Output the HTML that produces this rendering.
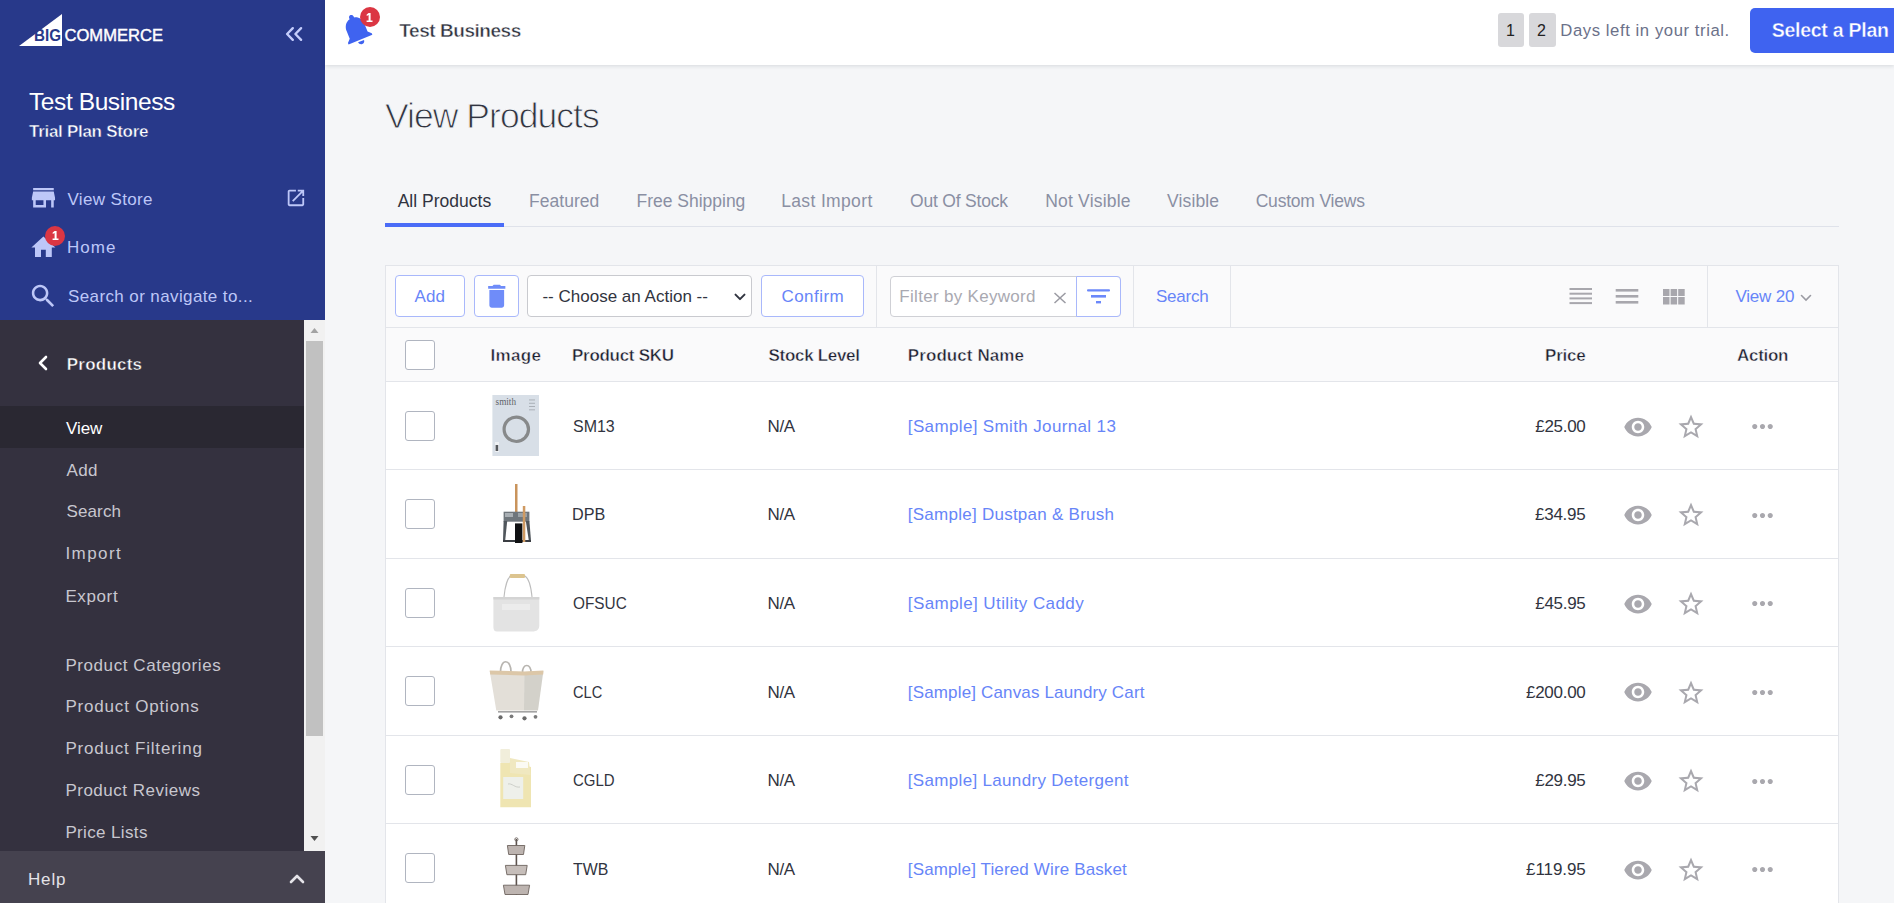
<!DOCTYPE html>
<html><head><meta charset="utf-8"><title>View Products</title>
<style>
html,body{margin:0;padding:0;width:1894px;height:903px;overflow:hidden;background:#f5f6f8;font-family:"Liberation Sans",sans-serif;}
.t{position:absolute;white-space:nowrap;font-family:"Liberation Sans",sans-serif;}
.r{position:absolute;box-sizing:border-box;}
svg{position:absolute;overflow:visible;}
</style></head><body>
<!-- SIDEBAR -->
<div class="r" style="left:0;top:0;width:325px;height:320px;background:#28398a"></div>
<svg style="left:0;top:0" width="200" height="60">
  <polygon points="19,46 62,14 62,46" fill="#fff"/>
  <text x="34" y="41.2" font-family="Liberation Sans" font-weight="700" font-size="17.4" fill="#28398a" textLength="27" lengthAdjust="spacingAndGlyphs">BIG</text>
  <text x="64.5" y="41.3" font-family="Liberation Sans" font-weight="400" font-size="17.4" fill="#fff" stroke="#fff" stroke-width="0.45" textLength="98.5" lengthAdjust="spacingAndGlyphs">COMMERCE</text>
</svg>
<svg style="left:0;top:0" width="325" height="60">
  <polyline points="292.8,28.2 287.1,34 292.8,39.8" fill="none" stroke="#c4cdfc" stroke-width="2.4" stroke-linecap="round" stroke-linejoin="round"/>
  <polyline points="301.1,28.2 295.4,34 301.1,39.8" fill="none" stroke="#c4cdfc" stroke-width="2.4" stroke-linecap="round" stroke-linejoin="round"/>
</svg>
<!-- store icon -->
<svg style="left:27.9px;top:183.3px" width="30.9" height="29.4" viewBox="0 0 24 24" preserveAspectRatio="none"><path fill="#bdc7f8" d="M20 4H4v2h16V4zm1 10v-2l-1-5H4l-1 5v2h1v6h10v-6h4v6h2v-6h1zm-9 4H6v-4h6v4z"/></svg>
<!-- external link -->
<svg style="left:285.3px;top:187.3px" width="21.9" height="21.9" viewBox="0 0 24 24"><path fill="#bdc7f8" d="M19 19H5V5h7V3H5c-1.11 0-2 .9-2 2v14c0 1.1.89 2 2 2h14c1.1 0 2-.9 2-2v-7h-2v7zM14 3v2h3.59l-9.83 9.83 1.41 1.41L19 6.41V10h2V3h-7z"/></svg>
<!-- home icon -->
<svg style="left:28.6px;top:233px" width="28.8" height="28.8" viewBox="0 0 24 24"><path fill="#bdc7f8" d="M10 20v-6h4v6h5v-8h3L12 3 2 12h3v8z"/></svg>
<div class="r" style="left:45px;top:225.5px;width:20px;height:20px;border-radius:50%;background:#db3643"></div>
<svg style="left:51.5px;top:231.3px" width="7" height="9" viewBox="0 0 7 9"><path fill="#fff" d="M2.6 0H4.6V7.5H6.5V9H0.6V7.5H2.6V2.1L0.7 3.1V1.4Z"/></svg>
<!-- search icon -->
<svg style="left:28.0px;top:280.6px" width="30.6" height="30.6" viewBox="0 0 24 24"><path fill="#bdc7f8" d="M15.5 14h-.79l-.28-.27C15.41 12.59 16 11.11 16 9.5 16 5.910 13.09 3 9.5 3S3 5.91 3 9.5 5.91 16 9.5 16c1.61 0 3.09-.59 4.230-1.57l.27.28v.79l5 4.99L20.49 19l-4.99-5zm-6 0C7.01 14 5 11.99 5 9.5S7.01 5 9.5 5 14 7.01 14 9.5 11.99 14 9.5 14z"/></svg>
<!-- dark area -->
<div class="r" style="left:0;top:320px;width:304px;height:531px;background:#34313f"></div>
<div class="r" style="left:304px;top:320px;width:21px;height:531px;background:#f1f1f1"></div>
<div class="r" style="left:306px;top:341px;width:17px;height:395px;background:#c1c1c1"></div>
<svg style="left:304px;top:320px" width="21" height="531">
  <polygon points="10.5,8 6.5,13 14.5,13" fill="#a3a3a3"/>
  <polygon points="6.5,516 14.5,516 10.5,521" fill="#505050"/>
</svg>
<svg style="left:0;top:320px" width="304" height="60">
  <polyline points="46,37 40,43 46,49" fill="none" stroke="#fff" stroke-width="2.6" stroke-linecap="round" stroke-linejoin="round"/>
</svg>
<div class="r" style="left:0;top:406px;width:304px;height:42px;background:#2a2832"></div>
<div class="r" style="left:0;top:851px;width:325px;height:52px;background:#45424f"></div>
<svg style="left:0;top:851px" width="325" height="52">
  <polyline points="291,31 297,25 303,31" fill="none" stroke="#e4e3e8" stroke-width="2.6" stroke-linecap="round" stroke-linejoin="round"/>
</svg>

<!-- HEADER -->
<div class="r" style="left:325px;top:0;width:1569px;height:65px;background:#fff;box-shadow:0 1px 4px rgba(30,40,60,0.14)"></div>
<svg style="left:336.8px;top:10.1px" width="38.5" height="38.5" viewBox="0 0 24 24"><g transform="rotate(-22 12 12)"><path fill="#3f63f0" d="M12 22c1.1 0 2-.9 2-2h-4c0 1.1.89 2 2 2zm6-6v-5c0-3.070-1.64-5.64-4.5-6.32V4c0-.83-.67-1.5-1.5-1.5s-1.5.67-1.5 1.5v.68C7.63 5.36 6 7.920 6 11v5l-2 2v1h16v-1l-2-2z"/></g></svg>
<div class="r" style="left:360px;top:7px;width:20px;height:20px;border-radius:50%;background:#db3643"></div>
<svg style="left:366.3px;top:13.1px" width="7" height="9" viewBox="0 0 7 9"><path fill="#fff" d="M2.6 0H4.6V7.5H6.5V9H0.6V7.5H2.6V2.1L0.7 3.1V1.4Z"/></svg>
<div class="r" style="left:1498px;top:13px;width:26px;height:34px;border-radius:3px;background:#d8d8db"></div>
<div class="r" style="left:1529px;top:13px;width:27px;height:34px;border-radius:3px;background:#d8d8db"></div>
<div class="r" style="left:1750px;top:8px;width:160px;height:45px;border-radius:5px;background:#3f63f0"></div>

<!-- MAIN -->
<div class="r" style="left:385px;top:226px;width:1454px;height:1px;background:#dfe2ea"></div>
<div class="r" style="left:385px;top:223px;width:119px;height:4px;background:#4a6cf7"></div>

<!-- toolbar panel -->
<div class="r" style="left:385px;top:265px;width:1454px;height:63px;background:#fafafb;border:1px solid #e3e5ea"></div>
<div class="r" style="left:876px;top:266px;width:1px;height:61px;background:#e3e5ea"></div>
<div class="r" style="left:1133px;top:266px;width:1px;height:61px;background:#e3e5ea"></div>
<div class="r" style="left:1230px;top:266px;width:1px;height:61px;background:#e3e5ea"></div>
<div class="r" style="left:1707px;top:266px;width:1px;height:61px;background:#e3e5ea"></div>
<div class="r" style="left:395px;top:275px;width:70px;height:42px;border:1px solid #a9b8fb;border-radius:4px;background:#fff"></div>
<div class="r" style="left:474px;top:275px;width:45px;height:42px;border:1px solid #a9b8fb;border-radius:4px;background:#fff"></div>
<svg style="left:481.6px;top:281.2px" width="29.5" height="30.7" viewBox="0 0 24 24" preserveAspectRatio="none"><path fill="#6f8cf9" d="M6 19c0 1.1.9 2 2 2h8c1.1 0 2-.9 2-2V7H6v12zM19 4h-3.5l-1-1h-5l-1 1H5v2h14V4z"/></svg>
<div class="r" style="left:527px;top:275px;width:225px;height:42px;border:1px solid #c9cacf;border-radius:4px;background:#fff"></div>
<svg style="left:527px;top:275px" width="225" height="42">
  <polyline points="208.5,19.6 213,24.1 217.5,19.6" fill="none" stroke="#313440" stroke-width="2" stroke-linecap="round" stroke-linejoin="round"/>
</svg>
<div class="r" style="left:761px;top:275px;width:103px;height:42px;border:1px solid #a9b8fb;border-radius:4px;background:#fff"></div>
<div class="r" style="left:890px;top:275.5px;width:231px;height:41.5px;border:1px solid #cfd0d5;border-radius:4px;background:#fff"></div>
<div class="r" style="left:1076px;top:275.5px;width:45px;height:41.5px;border:1px solid #a9b8fb;border-radius:0 4px 4px 0;background:#fff"></div>
<svg style="left:1050px;top:288px" width="20" height="20">
  <line x1="4.5" y1="5" x2="15.5" y2="15" stroke="#9a9aa2" stroke-width="1.5"/>
  <line x1="15.5" y1="5" x2="4.5" y2="15" stroke="#9a9aa2" stroke-width="1.5"/>
</svg>
<svg style="left:1086px;top:288px" width="26" height="18">
  <rect x="1" y="1.2" width="23" height="2.2" rx="1" fill="#6b88fa"/>
  <rect x="5" y="7" width="15" height="2.6" fill="#6b88fa"/>
  <rect x="10" y="13" width="5" height="2.4" fill="#6b88fa"/>
</svg>
<svg style="left:1568px;top:287px" width="130" height="20">
  <rect x="1.5" y="1" width="22.5" height="2" fill="#a8a7ad"/>
  <rect x="1.5" y="5.7" width="22.5" height="2" fill="#a8a7ad"/>
  <rect x="1.5" y="10.4" width="22.5" height="2" fill="#a8a7ad"/>
  <rect x="1.5" y="15.1" width="22.5" height="2" fill="#a8a7ad"/>
  <rect x="47.7" y="2" width="22.6" height="2.6" fill="#a8a7ad"/>
  <rect x="47.7" y="8" width="22.6" height="2.6" fill="#a8a7ad"/>
  <rect x="47.7" y="14" width="22.6" height="2.6" fill="#a8a7ad"/>
  <rect x="95" y="2" width="6.5" height="7" fill="#a8a7ad"/>
  <rect x="102.6" y="2" width="6.5" height="7" fill="#a8a7ad"/>
  <rect x="110.2" y="2" width="6.5" height="7" fill="#a8a7ad"/>
  <rect x="95" y="10" width="6.5" height="7.5" fill="#a8a7ad"/>
  <rect x="102.6" y="10" width="6.5" height="7.5" fill="#a8a7ad"/>
  <rect x="110.2" y="10" width="6.5" height="7.5" fill="#a8a7ad"/>
</svg>
<svg style="left:1798px;top:290px" width="16" height="14">
  <polyline points="3.5,5.5 8,10 12.5,5.5" fill="none" stroke="#9a9aa2" stroke-width="1.6" stroke-linecap="round"/>
</svg>

<!-- TABLE -->
<div class="r" style="left:385px;top:327px;width:1454px;height:600px;background:#fff;border-left:1px solid #e3e5ea;border-right:1px solid #e3e5ea"></div>
<div class="r" style="left:386px;top:328px;width:1452px;height:53px;background:#fafafb"></div>

<div class="r" style="left:405px;top:340px;width:30px;height:30px;border:1px solid #b0b5c0;border-radius:3px;background:#fff"></div>
<div class="r" style="left:386px;top:381.00px;width:1452px;height:1px;background:#e3e5ea"></div>
<div class="r" style="left:405px;top:411.00px;width:30px;height:30px;border:1px solid #b0b5c0;border-radius:3px;background:#fff"></div>
<svg style="left:492px;top:394.70px" width="48" height="62" viewBox="0 0 48 62">
<rect x="0.4" y="0" width="46.6" height="61" fill="#d8dfe7"/>
<text x="3.6" y="10.3" font-family="Liberation Serif" font-size="10.5" fill="#606368" textLength="20.4" lengthAdjust="spacingAndGlyphs">smith</text>
<rect x="37" y="4.5" width="6" height="0.9" fill="#a5abb2"/><rect x="37" y="7.8" width="6" height="0.9" fill="#a5abb2"/><rect x="37" y="11.1" width="6" height="0.9" fill="#a5abb2"/><rect x="37" y="14.4" width="6" height="0.9" fill="#a5abb2"/>
<circle cx="24.3" cy="34.3" r="12.2" fill="none" stroke="#87898a" stroke-width="3.2"/>
<rect x="3" y="47" width="4" height="10" fill="#eef1f4"/>
<rect x="3.6" y="50" width="2.6" height="6" fill="#55585c"/>
</svg>
<svg style="left:1623.00px;top:411.60px" width="30" height="30" viewBox="0 0 24 24"><path fill="#a9a8ae" d="M12 4.5C7 4.5 2.73 7.61 1 12c1.73 4.39 6 7.5 11 7.5s9.27-3.11 11-7.5c-1.73-4.39-6-7.5-11-7.5zM12 17c-2.76 0-5-2.24-5-5s2.24-5 5-5 5 2.24 5 5-2.24 5-5 5zm0-8c-1.66 0-3 1.34-3 3s1.34 3 3 3 3-1.34 3-3-1.34-3-3-3z"/></svg>
<svg style="left:1675.90px;top:411.80px" width="30" height="30" viewBox="0 0 24 24"><path fill="#a9a8ae" d="M22 9.24l-7.19-.62L12 2 9.19 8.63 2 9.24l5.46 4.73L5.82 21 12 17.27 18.18 21l-1.63-7.03L22 9.24zM12 15.4l-3.76 2.27 1-4.28-3.32-2.88 4.38-.38L12 6.1l1.71 4.04 4.38.38-3.32 2.88 1 4.28L12 15.4z"/></svg>
<svg style="left:1746.50px;top:411.10px" width="31" height="31" viewBox="0 0 24 24"><path fill="#a9a8ae" d="M6 10c-1.1 0-2 .9-2 2s.9 2 2 2 2-.9 2-2-.9-2-2-2zm12 0c-1.1 0-2 .9-2 2s.9 2 2 2 2-.9 2-2-.9-2-2-2zm-6 0c-1.1 0-2 .9-2 2s.9 2 2 2 2-.9 2-2-.9-2-2-2z"/></svg>
<div class="r" style="left:386px;top:469.40px;width:1452px;height:1px;background:#e3e5ea"></div>
<div class="r" style="left:405px;top:499.40px;width:30px;height:30px;border:1px solid #b0b5c0;border-radius:3px;background:#fff"></div>
<svg style="left:492px;top:483.10px" width="48" height="62" viewBox="0 0 48 62">
<rect x="23" y="1" width="2.5" height="30" fill="#c9945c"/>
<rect x="11.6" y="28.7" width="25.8" height="10" fill="#6f767c"/>
<rect x="13" y="30" width="8" height="4" fill="#a9afb4"/><rect x="26" y="30" width="9" height="4" fill="#9aa1a6"/>
<path d="M11.6 38 L15.2 38 L13.2 57.5 L11 57.5 Z" fill="#50565c"/>
<path d="M33.8 38 L37.4 38 L39 57.5 L36.8 57.5 Z" fill="#50565c"/>
<rect x="11" y="57" width="28" height="2" fill="#3a3d42"/>
<rect x="23" y="40.4" width="7.4" height="19.6" fill="#101113"/>
<rect x="30.8" y="23" width="2.5" height="36" fill="#cf9a62"/>
</svg>
<svg style="left:1623.00px;top:500.20px" width="30" height="30" viewBox="0 0 24 24"><path fill="#a9a8ae" d="M12 4.5C7 4.5 2.73 7.61 1 12c1.73 4.39 6 7.5 11 7.5s9.27-3.11 11-7.5c-1.73-4.39-6-7.5-11-7.5zM12 17c-2.76 0-5-2.24-5-5s2.24-5 5-5 5 2.24 5 5-2.24 5-5 5zm0-8c-1.66 0-3 1.34-3 3s1.34 3 3 3 3-1.34 3-3-1.34-3-3-3z"/></svg>
<svg style="left:1675.90px;top:500.40px" width="30" height="30" viewBox="0 0 24 24"><path fill="#a9a8ae" d="M22 9.24l-7.19-.62L12 2 9.19 8.63 2 9.24l5.46 4.73L5.82 21 12 17.27 18.18 21l-1.63-7.03L22 9.24zM12 15.4l-3.76 2.27 1-4.28-3.32-2.88 4.38-.38L12 6.1l1.71 4.04 4.38.38-3.32 2.88 1 4.28L12 15.4z"/></svg>
<svg style="left:1746.50px;top:499.70px" width="31" height="31" viewBox="0 0 24 24"><path fill="#a9a8ae" d="M6 10c-1.1 0-2 .9-2 2s.9 2 2 2 2-.9 2-2-.9-2-2-2zm12 0c-1.1 0-2 .9-2 2s.9 2 2 2 2-.9 2-2-.9-2-2-2zm-6 0c-1.1 0-2 .9-2 2s.9 2 2 2 2-.9 2-2-.9-2-2-2z"/></svg>
<div class="r" style="left:386px;top:557.80px;width:1452px;height:1px;background:#e3e5ea"></div>
<div class="r" style="left:405px;top:587.80px;width:30px;height:30px;border:1px solid #b0b5c0;border-radius:3px;background:#fff"></div>
<svg style="left:492px;top:571.50px" width="50" height="62" viewBox="0 0 50 62">
<path d="M12 25 C13 14 16 6 18.5 4 M40 25 C39 14 36 6 33 4" fill="none" stroke="#bdbdbd" stroke-width="1.1"/>
<rect x="17.8" y="2.1" width="15.2" height="3.8" rx="1" fill="#dcc48f"/>
<path d="M1.4 25 L47.3 25 L47.3 53 C47.3 57.5 45 59.5 40 59.5 L5 59.5 C2.5 59.5 1.4 58 1.4 55 Z" fill="#e3e3e3"/>
<rect x="1.4" y="25" width="45.9" height="2.5" fill="#d4d4d4"/>
<rect x="10" y="32" width="28" height="6" fill="#ececec"/>
</svg>
<svg style="left:1623.00px;top:588.80px" width="30" height="30" viewBox="0 0 24 24"><path fill="#a9a8ae" d="M12 4.5C7 4.5 2.73 7.61 1 12c1.73 4.39 6 7.5 11 7.5s9.27-3.11 11-7.5c-1.73-4.39-6-7.5-11-7.5zM12 17c-2.76 0-5-2.24-5-5s2.24-5 5-5 5 2.24 5 5-2.24 5-5 5zm0-8c-1.66 0-3 1.34-3 3s1.34 3 3 3 3-1.34 3-3-1.34-3-3-3z"/></svg>
<svg style="left:1675.90px;top:589.00px" width="30" height="30" viewBox="0 0 24 24"><path fill="#a9a8ae" d="M22 9.24l-7.19-.62L12 2 9.19 8.63 2 9.24l5.46 4.73L5.82 21 12 17.27 18.18 21l-1.63-7.03L22 9.24zM12 15.4l-3.76 2.27 1-4.28-3.32-2.88 4.38-.38L12 6.1l1.71 4.04 4.38.38-3.32 2.88 1 4.28L12 15.4z"/></svg>
<svg style="left:1746.50px;top:588.30px" width="31" height="31" viewBox="0 0 24 24"><path fill="#a9a8ae" d="M6 10c-1.1 0-2 .9-2 2s.9 2 2 2 2-.9 2-2-.9-2-2-2zm12 0c-1.1 0-2 .9-2 2s.9 2 2 2 2-.9 2-2-.9-2-2-2zm-6 0c-1.1 0-2 .9-2 2s.9 2 2 2 2-.9 2-2-.9-2-2-2z"/></svg>
<div class="r" style="left:386px;top:646.20px;width:1452px;height:1px;background:#e3e5ea"></div>
<div class="r" style="left:405px;top:676.20px;width:30px;height:30px;border:1px solid #b0b5c0;border-radius:3px;background:#fff"></div>
<svg style="left:489px;top:657.70px" width="56" height="66" viewBox="0 0 56 66">
<path d="M11.5 15 C11 0 22.5 0 22 15" fill="none" stroke="#b8b5b0" stroke-width="1.7"/>
<path d="M33.5 15 C33 5 42.5 5 42 15" fill="none" stroke="#b8b5b0" stroke-width="1.7"/>
<path d="M0.7 13 L35.2 14 L35 52.6 L7.3 52.6 Z" fill="#e3dfd8"/>
<path d="M35.2 14 L54.4 13 L49 52.6 L35 52.6 Z" fill="#d3d1ca"/>
<path d="M0.7 12.5 L35.2 13.5 L54.4 12.5 L54.2 16.5 L35.2 17.5 L1.2 16.5 Z" fill="#dcc7a8"/>
<rect x="9" y="53" width="39" height="1.6" fill="#a3a3a3"/>
<circle cx="11.5" cy="59.3" r="2.1" fill="#6a6a6a"/><circle cx="22.5" cy="58.3" r="1.9" fill="#7a7a7a"/><circle cx="35.5" cy="60.3" r="2.1" fill="#6a6a6a"/><circle cx="46.5" cy="58.8" r="1.9" fill="#7a7a7a"/>
</svg>
<svg style="left:1623.00px;top:677.40px" width="30" height="30" viewBox="0 0 24 24"><path fill="#a9a8ae" d="M12 4.5C7 4.5 2.73 7.61 1 12c1.73 4.39 6 7.5 11 7.5s9.27-3.11 11-7.5c-1.73-4.39-6-7.5-11-7.5zM12 17c-2.76 0-5-2.24-5-5s2.24-5 5-5 5 2.24 5 5-2.24 5-5 5zm0-8c-1.66 0-3 1.34-3 3s1.34 3 3 3 3-1.34 3-3-1.34-3-3-3z"/></svg>
<svg style="left:1675.90px;top:677.60px" width="30" height="30" viewBox="0 0 24 24"><path fill="#a9a8ae" d="M22 9.24l-7.19-.62L12 2 9.19 8.63 2 9.24l5.46 4.73L5.82 21 12 17.27 18.18 21l-1.63-7.03L22 9.24zM12 15.4l-3.76 2.27 1-4.28-3.32-2.88 4.38-.38L12 6.1l1.71 4.04 4.38.38-3.32 2.88 1 4.28L12 15.4z"/></svg>
<svg style="left:1746.50px;top:676.90px" width="31" height="31" viewBox="0 0 24 24"><path fill="#a9a8ae" d="M6 10c-1.1 0-2 .9-2 2s.9 2 2 2 2-.9 2-2-.9-2-2-2zm12 0c-1.1 0-2 .9-2 2s.9 2 2 2 2-.9 2-2-.9-2-2-2zm-6 0c-1.1 0-2 .9-2 2s.9 2 2 2 2-.9 2-2-.9-2-2-2z"/></svg>
<div class="r" style="left:386px;top:734.60px;width:1452px;height:1px;background:#e3e5ea"></div>
<div class="r" style="left:405px;top:764.60px;width:30px;height:30px;border:1px solid #b0b5c0;border-radius:3px;background:#fff"></div>
<svg style="left:498px;top:748.60px" width="36" height="62" viewBox="0 0 36 62">
<path d="M2.3 14 L12 13 L33 18 L33 58.3 L2.3 58.3 Z" fill="#efe5b2"/>
<rect x="2.3" y="0" width="9.7" height="14" rx="1" fill="#f1eedb"/>
<path d="M12 9 L31 13 L32.5 26 L12 24 Z" fill="#f0e8c0"/>
<rect x="18" y="13" width="12" height="6" fill="#fbfaf3"/>
<rect x="5.2" y="28" width="20" height="22" fill="#eef0ea"/>
<path d="M10 35 C14 34 17 39 22 38" fill="none" stroke="#c4c6c0" stroke-width="0.8"/>
</svg>
<svg style="left:1623.00px;top:766.00px" width="30" height="30" viewBox="0 0 24 24"><path fill="#a9a8ae" d="M12 4.5C7 4.5 2.73 7.61 1 12c1.73 4.39 6 7.5 11 7.5s9.27-3.11 11-7.5c-1.73-4.39-6-7.5-11-7.5zM12 17c-2.76 0-5-2.24-5-5s2.24-5 5-5 5 2.24 5 5-2.24 5-5 5zm0-8c-1.66 0-3 1.34-3 3s1.34 3 3 3 3-1.34 3-3-1.34-3-3-3z"/></svg>
<svg style="left:1675.90px;top:766.20px" width="30" height="30" viewBox="0 0 24 24"><path fill="#a9a8ae" d="M22 9.24l-7.19-.62L12 2 9.19 8.63 2 9.24l5.46 4.73L5.82 21 12 17.27 18.18 21l-1.63-7.03L22 9.24zM12 15.4l-3.76 2.27 1-4.28-3.32-2.88 4.38-.38L12 6.1l1.71 4.04 4.38.38-3.32 2.88 1 4.28L12 15.4z"/></svg>
<svg style="left:1746.50px;top:765.50px" width="31" height="31" viewBox="0 0 24 24"><path fill="#a9a8ae" d="M6 10c-1.1 0-2 .9-2 2s.9 2 2 2 2-.9 2-2-.9-2-2-2zm12 0c-1.1 0-2 .9-2 2s.9 2 2 2 2-.9 2-2-.9-2-2-2zm-6 0c-1.1 0-2 .9-2 2s.9 2 2 2 2-.9 2-2-.9-2-2-2z"/></svg>
<div class="r" style="left:386px;top:823.00px;width:1452px;height:1px;background:#e3e5ea"></div>
<div class="r" style="left:405px;top:853.00px;width:30px;height:30px;border:1px solid #b0b5c0;border-radius:3px;background:#fff"></div>
<svg style="left:500px;top:836.50px" width="34" height="62" viewBox="0 0 34 62">
<rect x="15.6" y="2" width="1.6" height="56" fill="#5c524d"/>
<circle cx="16.4" cy="2.4" r="1.6" fill="none" stroke="#6d6460" stroke-width="0.9"/>
<path d="M7.4 8.5 L24.8 8.5 L23.5 17.5 L8.7 17.5 Z" fill="#bdb4b0" stroke="#6d635e" stroke-width="0.9"/>
<path d="M5.4 28.4 L27.2 28.4 L25.7 37.7 L6.9 37.7 Z" fill="#c6beba" stroke="#6d635e" stroke-width="0.9"/>
<path d="M3.4 48.2 L29.6 48.2 L28 57.5 L5 57.5 Z" fill="#bdb4b0" stroke="#6d635e" stroke-width="0.9"/>
</svg>
<svg style="left:1623.00px;top:854.60px" width="30" height="30" viewBox="0 0 24 24"><path fill="#a9a8ae" d="M12 4.5C7 4.5 2.73 7.61 1 12c1.73 4.39 6 7.5 11 7.5s9.27-3.11 11-7.5c-1.73-4.39-6-7.5-11-7.5zM12 17c-2.76 0-5-2.24-5-5s2.24-5 5-5 5 2.24 5 5-2.24 5-5 5zm0-8c-1.66 0-3 1.34-3 3s1.34 3 3 3 3-1.34 3-3-1.34-3-3-3z"/></svg>
<svg style="left:1675.90px;top:854.80px" width="30" height="30" viewBox="0 0 24 24"><path fill="#a9a8ae" d="M22 9.24l-7.19-.62L12 2 9.19 8.63 2 9.24l5.46 4.73L5.82 21 12 17.27 18.18 21l-1.63-7.03L22 9.24zM12 15.4l-3.76 2.27 1-4.28-3.32-2.88 4.38-.38L12 6.1l1.71 4.04 4.38.38-3.32 2.88 1 4.28L12 15.4z"/></svg>
<svg style="left:1746.50px;top:854.10px" width="31" height="31" viewBox="0 0 24 24"><path fill="#a9a8ae" d="M6 10c-1.1 0-2 .9-2 2s.9 2 2 2 2-.9 2-2-.9-2-2-2zm12 0c-1.1 0-2 .9-2 2s.9 2 2 2 2-.9 2-2-.9-2-2-2zm-6 0c-1.1 0-2 .9-2 2s.9 2 2 2 2-.9 2-2-.9-2-2-2z"/></svg>
<div class="r" style="left:385px;top:327px;width:1454px;height:1px;background:#e3e5ea"></div>

<div class="t" style="left:29.00px;top:90.00px;font-size:24.5px;line-height:24.5px;font-weight:400;color:#ffffff;letter-spacing:-0.408px;">Test Business</div>
<div class="t" style="left:29.00px;top:123.00px;font-size:17px;line-height:17px;font-weight:700;color:#ffffff;letter-spacing:-0.287px;-webkit-text-stroke:0.45px #28398a;">Trial Plan Store</div>
<div class="t" style="left:67.50px;top:191.00px;font-size:17px;line-height:17px;font-weight:400;color:#bdc7f8;letter-spacing:0.340px;">View Store</div>
<div class="t" style="left:67.00px;top:239.00px;font-size:17px;line-height:17px;font-weight:400;color:#bdc7f8;letter-spacing:1.036px;">Home</div>
<div class="t" style="left:68.00px;top:288.00px;font-size:17px;line-height:17px;font-weight:400;color:#bdc7f8;letter-spacing:0.389px;">Search or navigate to...</div>
<div class="t" style="left:66.80px;top:356.00px;font-size:17px;line-height:17px;font-weight:700;color:#ffffff;letter-spacing:0.225px;-webkit-text-stroke:0.45px #34313f;">Products</div>
<div class="t" style="left:66.00px;top:420.00px;font-size:17px;line-height:17px;font-weight:400;color:#ffffff;letter-spacing:-0.088px;">View</div>
<div class="t" style="left:66.40px;top:462.00px;font-size:17px;line-height:17px;font-weight:400;color:#c8c7cf;letter-spacing:0.453px;">Add</div>
<div class="t" style="left:66.40px;top:503.00px;font-size:17px;line-height:17px;font-weight:400;color:#c8c7cf;letter-spacing:0.158px;">Search</div>
<div class="t" style="left:65.40px;top:545.00px;font-size:17px;line-height:17px;font-weight:400;color:#c8c7cf;letter-spacing:1.429px;">Import</div>
<div class="t" style="left:65.40px;top:588.00px;font-size:17px;line-height:17px;font-weight:400;color:#c8c7cf;letter-spacing:0.618px;">Export</div>
<div class="t" style="left:65.40px;top:657.00px;font-size:17px;line-height:17px;font-weight:400;color:#c8c7cf;letter-spacing:0.575px;">Product Categories</div>
<div class="t" style="left:65.40px;top:698.00px;font-size:17px;line-height:17px;font-weight:400;color:#c8c7cf;letter-spacing:0.815px;">Product Options</div>
<div class="t" style="left:65.40px;top:740.00px;font-size:17px;line-height:17px;font-weight:400;color:#c8c7cf;letter-spacing:0.793px;">Product Filtering</div>
<div class="t" style="left:65.40px;top:782.00px;font-size:17px;line-height:17px;font-weight:400;color:#c8c7cf;letter-spacing:0.504px;">Product Reviews</div>
<div class="t" style="left:65.40px;top:824.00px;font-size:17px;line-height:17px;font-weight:400;color:#c8c7cf;letter-spacing:0.359px;">Price Lists</div>
<div class="t" style="left:28.00px;top:871.00px;font-size:17px;line-height:17px;font-weight:400;color:#e4e3e8;letter-spacing:0.831px;">Help</div>
<div class="t" style="left:399.30px;top:21.00px;font-size:19px;line-height:19px;font-weight:700;color:#313440;letter-spacing:-0.454px;-webkit-text-stroke:0.45px #ffffff;">Test Business</div>
<div class="t" style="left:1506.00px;top:23.00px;font-size:16px;line-height:16px;font-weight:400;color:#222222;letter-spacing:0.000px;">1</div>
<div class="t" style="left:1537.00px;top:23.00px;font-size:16px;line-height:16px;font-weight:400;color:#222222;letter-spacing:0.000px;">2</div>
<div class="t" style="left:1560.30px;top:23.00px;font-size:16.7px;line-height:16.7px;font-weight:400;color:#6b7189;letter-spacing:0.571px;">Days left in your trial.</div>
<div class="t" style="left:1771.70px;top:21.00px;font-size:19.5px;line-height:19.5px;font-weight:700;color:#ffffff;letter-spacing:-0.259px;-webkit-text-stroke:0.35px #3f63f0;">Select a Plan</div>
<div class="t" style="left:385.00px;top:99.00px;font-size:35.5px;line-height:35.5px;font-weight:400;color:#313440;letter-spacing:-0.959px;-webkit-text-stroke:0.9px #f5f6f8;">View Products</div>
<div class="t" style="left:397.70px;top:193.00px;font-size:17.5px;line-height:17.5px;font-weight:400;color:#313440;letter-spacing:0.007px;">All Products</div>
<div class="t" style="left:529.00px;top:193.00px;font-size:17.5px;line-height:17.5px;font-weight:400;color:#8a8fa3;letter-spacing:0.027px;">Featured</div>
<div class="t" style="left:636.60px;top:193.00px;font-size:17.5px;line-height:17.5px;font-weight:400;color:#8a8fa3;letter-spacing:-0.019px;">Free Shipping</div>
<div class="t" style="left:781.20px;top:193.00px;font-size:17.5px;line-height:17.5px;font-weight:400;color:#8a8fa3;letter-spacing:0.353px;">Last Import</div>
<div class="t" style="left:910.00px;top:193.00px;font-size:17.5px;line-height:17.5px;font-weight:400;color:#8a8fa3;letter-spacing:-0.193px;">Out Of Stock</div>
<div class="t" style="left:1045.30px;top:193.00px;font-size:17.5px;line-height:17.5px;font-weight:400;color:#8a8fa3;letter-spacing:0.180px;">Not Visible</div>
<div class="t" style="left:1167.10px;top:193.00px;font-size:17.5px;line-height:17.5px;font-weight:400;color:#8a8fa3;letter-spacing:0.116px;">Visible</div>
<div class="t" style="left:1255.70px;top:193.00px;font-size:17.5px;line-height:17.5px;font-weight:400;color:#8a8fa3;letter-spacing:-0.206px;">Custom Views</div>
<div class="t" style="left:414.40px;top:288.00px;font-size:17px;line-height:17px;font-weight:400;color:#6785f8;letter-spacing:0.153px;">Add</div>
<div class="t" style="left:542.40px;top:288.00px;font-size:17px;line-height:17px;font-weight:400;color:#313440;letter-spacing:0.008px;">-- Choose an Action --</div>
<div class="t" style="left:781.40px;top:288.00px;font-size:17px;line-height:17px;font-weight:400;color:#6785f8;letter-spacing:0.475px;">Confirm</div>
<div class="t" style="left:899.30px;top:288.00px;font-size:17px;line-height:17px;font-weight:400;color:#a9a9b1;letter-spacing:0.302px;">Filter by Keyword</div>
<div class="t" style="left:1156.00px;top:288.00px;font-size:17px;line-height:17px;font-weight:400;color:#6785f8;letter-spacing:-0.222px;">Search</div>
<div class="t" style="left:1735.40px;top:288.00px;font-size:17px;line-height:17px;font-weight:400;color:#6785f8;letter-spacing:-0.186px;">View 20</div>
<div class="t" style="left:490.50px;top:347.00px;font-size:17px;line-height:17px;font-weight:700;color:#1d2030;letter-spacing:0.331px;-webkit-text-stroke:0.45px #fafafb;">Image</div>
<div class="t" style="left:572.00px;top:347.00px;font-size:17px;line-height:17px;font-weight:700;color:#1d2030;letter-spacing:-0.286px;-webkit-text-stroke:0.45px #fafafb;">Product SKU</div>
<div class="t" style="left:768.60px;top:347.00px;font-size:17px;line-height:17px;font-weight:700;color:#1d2030;letter-spacing:-0.316px;-webkit-text-stroke:0.45px #fafafb;">Stock Level</div>
<div class="t" style="left:907.80px;top:347.00px;font-size:17px;line-height:17px;font-weight:700;color:#1d2030;letter-spacing:0.082px;-webkit-text-stroke:0.45px #fafafb;">Product Name</div>
<div class="t" style="left:1545.00px;top:347.00px;font-size:17px;line-height:17px;font-weight:700;color:#1d2030;letter-spacing:-0.208px;-webkit-text-stroke:0.45px #fafafb;">Price</div>
<div class="t" style="left:1737.00px;top:347.00px;font-size:17px;line-height:17px;font-weight:700;color:#1d2030;letter-spacing:-0.300px;-webkit-text-stroke:0.45px #fafafb;">Action</div>
<div class="t" style="left:573.00px;top:418.00px;font-size:17px;line-height:17px;font-weight:400;color:#313440;letter-spacing:0.000px;transform:scaleX(0.9396);transform-origin:0.00px 0;">SM13</div>
<div class="t" style="left:767.60px;top:418.00px;font-size:17px;line-height:17px;font-weight:400;color:#313440;letter-spacing:-0.400px;">N/A</div>
<div class="t" style="left:907.80px;top:418.00px;font-size:17px;line-height:17px;font-weight:400;color:#6785f8;letter-spacing:0.362px;">[Sample] Smith Journal 13</div>
<div class="t" style="left:1535.30px;top:418.00px;font-size:17px;line-height:17px;font-weight:400;color:#313440;letter-spacing:-0.308px;">£25.00</div>
<div class="t" style="left:572.00px;top:506.00px;font-size:17px;line-height:17px;font-weight:400;color:#313440;letter-spacing:0.000px;transform:scaleX(0.9519);transform-origin:1.00px 0;">DPB</div>
<div class="t" style="left:767.60px;top:506.00px;font-size:17px;line-height:17px;font-weight:400;color:#313440;letter-spacing:-0.400px;">N/A</div>
<div class="t" style="left:907.80px;top:506.00px;font-size:17px;line-height:17px;font-weight:400;color:#6785f8;letter-spacing:0.254px;">[Sample] Dustpan &amp; Brush</div>
<div class="t" style="left:1535.00px;top:506.00px;font-size:17px;line-height:17px;font-weight:400;color:#313440;letter-spacing:-0.248px;">£34.95</div>
<div class="t" style="left:573.00px;top:595.00px;font-size:17px;line-height:17px;font-weight:400;color:#313440;letter-spacing:0.000px;transform:scaleX(0.9034);transform-origin:0.00px 0;">OFSUC</div>
<div class="t" style="left:767.60px;top:595.00px;font-size:17px;line-height:17px;font-weight:400;color:#313440;letter-spacing:-0.400px;">N/A</div>
<div class="t" style="left:907.80px;top:595.00px;font-size:17px;line-height:17px;font-weight:400;color:#6785f8;letter-spacing:0.413px;">[Sample] Utility Caddy</div>
<div class="t" style="left:1535.30px;top:595.00px;font-size:17px;line-height:17px;font-weight:400;color:#313440;letter-spacing:-0.308px;">£45.95</div>
<div class="t" style="left:573.00px;top:684.00px;font-size:17px;line-height:17px;font-weight:400;color:#313440;letter-spacing:0.000px;transform:scaleX(0.8597);transform-origin:0.00px 0;">CLC</div>
<div class="t" style="left:767.60px;top:684.00px;font-size:17px;line-height:17px;font-weight:400;color:#313440;letter-spacing:-0.400px;">N/A</div>
<div class="t" style="left:907.80px;top:684.00px;font-size:17px;line-height:17px;font-weight:400;color:#6785f8;letter-spacing:0.155px;">[Sample] Canvas Laundry Cart</div>
<div class="t" style="left:1526.00px;top:684.00px;font-size:17px;line-height:17px;font-weight:400;color:#313440;letter-spacing:-0.283px;">£200.00</div>
<div class="t" style="left:573.00px;top:772.00px;font-size:17px;line-height:17px;font-weight:400;color:#313440;letter-spacing:0.000px;transform:scaleX(0.8817);transform-origin:0.00px 0;">CGLD</div>
<div class="t" style="left:767.60px;top:772.00px;font-size:17px;line-height:17px;font-weight:400;color:#313440;letter-spacing:-0.400px;">N/A</div>
<div class="t" style="left:907.80px;top:772.00px;font-size:17px;line-height:17px;font-weight:400;color:#6785f8;letter-spacing:0.324px;">[Sample] Laundry Detergent</div>
<div class="t" style="left:1535.30px;top:772.00px;font-size:17px;line-height:17px;font-weight:400;color:#313440;letter-spacing:-0.308px;">£29.95</div>
<div class="t" style="left:573.00px;top:861.00px;font-size:17px;line-height:17px;font-weight:400;color:#313440;letter-spacing:0.000px;transform:scaleX(0.9351);transform-origin:0.00px 0;">TWB</div>
<div class="t" style="left:767.60px;top:861.00px;font-size:17px;line-height:17px;font-weight:400;color:#313440;letter-spacing:-0.400px;">N/A</div>
<div class="t" style="left:907.80px;top:861.00px;font-size:17px;line-height:17px;font-weight:400;color:#6785f8;letter-spacing:0.139px;">[Sample] Tiered Wire Basket</div>
<div class="t" style="left:1526.00px;top:861.00px;font-size:17px;line-height:17px;font-weight:400;color:#313440;letter-spacing:-0.072px;">£119.95</div>
</body></html>
